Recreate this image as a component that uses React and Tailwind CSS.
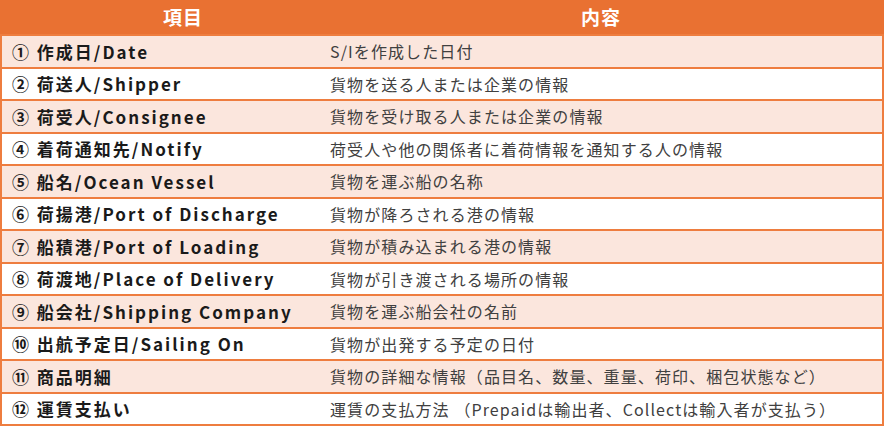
import React from "react";

const rows = [
  ["① 作成日/Date", "S/Iを作成した日付"],
  ["② 荷送人/Shipper", "貨物を送る人または企業の情報"],
  ["③ 荷受人/Consignee", "貨物を受け取る人または企業の情報"],
  ["④ 着荷通知先/Notify", "荷受人や他の関係者に着荷情報を通知する人の情報"],
  ["⑤ 船名/Ocean Vessel", "貨物を運ぶ船の名称"],
  ["⑥ 荷揚港/Port of Discharge", "貨物が降ろされる港の情報"],
  ["⑦ 船積港/Port of Loading", "貨物が積み込まれる港の情報"],
  ["⑧ 荷渡地/Place of Delivery", "貨物が引き渡される場所の情報"],
  ["⑨ 船会社/Shipping Company", "貨物を運ぶ船会社の名前"],
  ["⑩ 出航予定日/Sailing On", "貨物が出発する予定の日付"],
  ["⑪ 商品明細", "貨物の詳細な情報（品目名、数量、重量、荷印、梱包状態など）"],
  ["⑫ 運賃支払い", "運賃の支払方法 （Prepaidは輸出者、Collectは輸入者が支払う）"],
];

export default function App() {
  return (
    <div className="w-[886px] h-[429px] bg-white" style={{ fontFamily: '"Noto Sans CJK JP", "Noto Sans", sans-serif' }}>
      <div className="w-[884px] border-2 border-t-0 border-[#ee7d3f]">
        {/* header */}
        <div className="grid grid-cols-[318px_1fr] h-[34px] bg-[#e97132] text-white font-bold text-[19px] -mx-[2px] px-[2px]">
          <div className="flex items-center justify-center pl-[44px] tracking-[1px]">項目</div>
          <div className="flex items-center justify-center tracking-[1px]">内容</div>
        </div>
        {rows.map(([item, desc], i) => (
          <div
            key={i}
            className={
              "grid grid-cols-[318px_1fr] h-[32.5px] items-center border-t-2 border-[#ee7d3f] " +
              (i % 2 === 0 ? "bg-[#fbe6dd]" : "bg-white")
            }
          >
            <div className="pl-[10px] text-[17px] font-bold tracking-[2px] text-[#1a1a1a] whitespace-nowrap">{item}</div>
            <div className="pl-[10px] text-[16px] tracking-[1.1px] text-[#404040] whitespace-nowrap">{desc}</div>
          </div>
        ))}
      </div>
    </div>
  );
}
